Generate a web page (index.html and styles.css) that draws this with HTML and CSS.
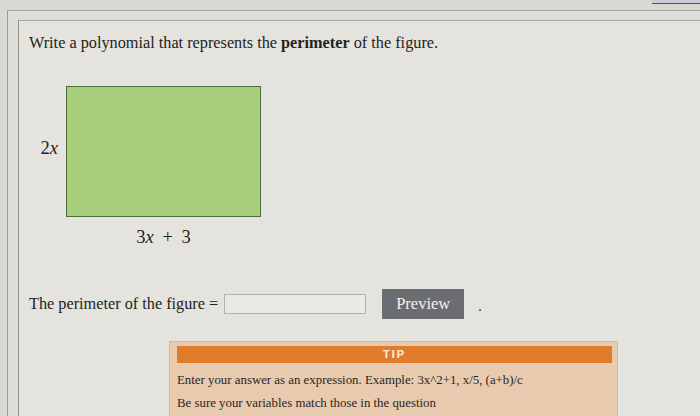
FILE: index.html
```html
<!DOCTYPE html>
<html>
<head>
<meta charset="utf-8">
<link rel="stylesheet" href="styles.css">
</head>
<body>
<div class="topbar"><span class="toplink"></span></div>
<div class="outer">
  <div class="inner">
    <p class="prompt">Write a polynomial that represents the <b>perimeter</b> of the figure.</p>
    <div class="figure">
      <div class="side-label">2<i>x</i></div>
      <div class="rect"></div>
      <div></div>
      <div class="bottom-label">3<i>x</i> + 3</div>
    </div>
    <div class="answer-row">
      <span class="answer-label">The perimeter of the figure =</span>
      <input class="answer-input" type="text">
      <button class="preview">Preview</button>
      <span class="dot">.</span>
    </div>
    <div class="tip">
      <div class="tip-bar">TIP</div>
      <div class="tip-text">
        <div>Enter your answer as an expression. Example: 3x^2+1, x/5, (a+b)/c</div>
        <div>Be sure your variables match those in the question</div>
      </div>
    </div>
  </div>
</div>
</body>
</html>
```
FILE: styles.css
```css
html, body {
  margin: 0;
  padding: 0;
  height: 100%;
  overflow: hidden;
}
body {
  background: #d9d8d2;
  font-family: "Liberation Serif", "Times New Roman", serif;
  color: #232323;
  display: flex;
  flex-direction: column;
}
.topbar {
  height: 10px;
  flex: none;
  display: flex;
  justify-content: flex-end;
  overflow: hidden;
}
.toplink {
  display: block;
  width: 48px;
  height: 3px;
  border-bottom: 1px solid #4c5566;
  background: #c9ccd4;
}
.outer {
  flex: 1;
  min-height: 0;
  display: flex;
  flex-direction: column;
  margin-left: 7px;
  border-left: 1px solid #9d9c97;
  border-top: 1px solid #a3a29d;
  padding: 9px 0 0 10px;
  background: #dedDd8;
}
.inner {
  flex: 1;
  min-height: 0;
  overflow: hidden;
  border-left: 1px solid #8e8d88;
  border-top: 1px solid #a9a8a3;
  background: #e4e3de;
  padding-left: 10px;
}
.prompt {
  margin: 0;
  padding-top: 13px;
  font-size: 16.25px;
  line-height: 19px;
}
.figure {
  margin-top: 33px;
  display: grid;
  grid-template-columns: 37px 195px;
  grid-template-rows: 131px auto;
}
.side-label {
  align-self: center;
  justify-self: end;
  padding-right: 8px;
  font-size: 18.5px;
  margin-top: -6px;
}
.rect {
  box-sizing: border-box;
  background: #a7cf7b;
  border: 1.5px solid #4f6c3e;
}
.bottom-label {
  text-align: center;
  font-size: 18.5px;
  word-spacing: 4px;
  line-height: 20px;
  margin-top: 10px;
}
.answer-row {
  margin-top: 42px;
  display: flex;
  align-items: center;
  height: 30px;
}
.answer-label {
  font-size: 16.25px;
}
.answer-input {
  box-sizing: border-box;
  width: 142px;
  height: 20px;
  margin: 0 0 0 6px;
  border: 1px solid #b3b2ad;
  background: #eae9e5;
  padding: 0;
}
.preview {
  box-sizing: border-box;
  margin-left: 16px;
  width: 82px;
  height: 30px;
  border: none;
  background: #6c6d71;
  color: #f2f2f2;
  font-family: "Liberation Serif", "Times New Roman", serif;
  font-size: 16.5px;
  padding: 0;
}
.dot {
  margin-left: 14px;
  font-size: 14px;
  margin-top: 6px;
}
.tip {
  margin-left: 140px;
  margin-top: 22px;
  width: 449px;
  box-sizing: border-box;
  height: 76px;
  border: 1px solid #dbb898;
  border-bottom: none;
  background: #e8cbaf;
  padding: 4px 5px 0 7px;
}
.tip-bar {
  height: 17px;
  background: #e07c2c;
  color: #fbefe4;
  font-family: "Liberation Sans", Arial, sans-serif;
  font-weight: bold;
  font-size: 11px;
  letter-spacing: 2px;
  line-height: 17px;
  text-align: center;
}
.tip-text {
  padding-top: 6px;
  font-size: 12.85px;
  line-height: 23px;
  color: #2a2622;
}
```
